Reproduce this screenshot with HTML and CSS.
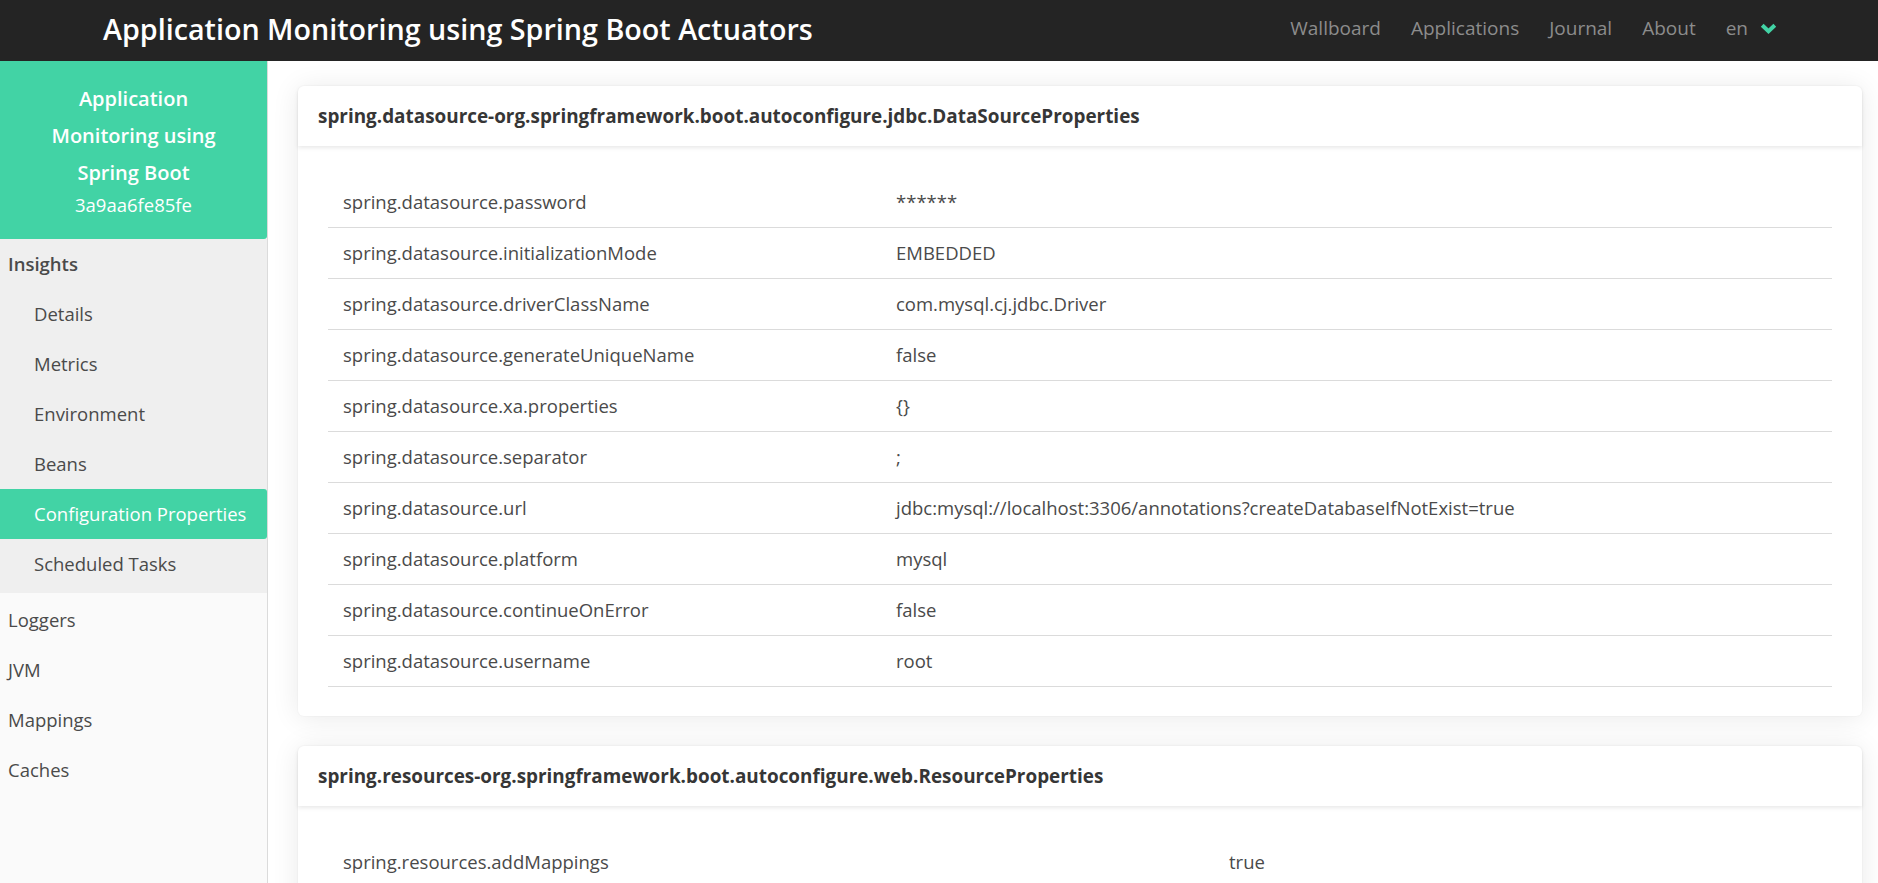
FILE: index.html
```html
<!DOCTYPE html>
<html lang="en">
<head>
<meta charset="utf-8">
<title>Application Monitoring using Spring Boot Actuators</title>
<link rel="stylesheet" href="styles.css">
</head>
<body>
<header class="navbar">
  <div class="brand">Application Monitoring using Spring Boot Actuators</div>
  <nav class="nav-menu">
    <a class="nav-item">Wallboard</a>
    <a class="nav-item">Applications</a>
    <a class="nav-item">Journal</a>
    <a class="nav-item">About</a>
    <a class="nav-item nav-lang">en
      <svg class="chevron" width="17" height="11" viewBox="0 0 17 11" aria-hidden="true">
        <polyline points="2.2,2.2 8.5,8.2 14.8,2.2" fill="none" stroke="#42d3a5" stroke-width="4" stroke-linejoin="miter"/>
      </svg>
    </a>
  </nav>
</header>
<div class="layout">
  <aside class="sidebar">
    <div class="app-card">
      <div class="app-name">Application Monitoring using Spring Boot</div>
      <div class="app-id">3a9aa6fe85fe</div>
    </div>
    <ul class="menu-group">
      <li class="menu-item menu-head">Insights</li>
      <li class="menu-item menu-sub">Details</li>
      <li class="menu-item menu-sub">Metrics</li>
      <li class="menu-item menu-sub">Environment</li>
      <li class="menu-item menu-sub">Beans</li>
      <li class="menu-item menu-sub is-active">Configuration Properties</li>
      <li class="menu-item menu-sub">Scheduled Tasks</li>
    </ul>
    <ul class="menu-rest">
      <li class="menu-item">Loggers</li>
      <li class="menu-item">JVM</li>
      <li class="menu-item">Mappings</li>
      <li class="menu-item">Caches</li>
    </ul>
  </aside>
  <main class="content">
    <section class="card">
      <header class="card-header">spring.datasource-org.springframework.boot.autoconfigure.jdbc.DataSourceProperties</header>
      <div class="card-content">
        <table class="props props-datasource">
          <tbody>
            <tr><td class="key">spring.datasource.password</td><td>******</td></tr>
            <tr><td class="key">spring.datasource.initializationMode</td><td>EMBEDDED</td></tr>
            <tr><td class="key">spring.datasource.driverClassName</td><td>com.mysql.cj.jdbc.Driver</td></tr>
            <tr><td class="key">spring.datasource.generateUniqueName</td><td>false</td></tr>
            <tr><td class="key">spring.datasource.xa.properties</td><td>{}</td></tr>
            <tr><td class="key">spring.datasource.separator</td><td>;</td></tr>
            <tr><td class="key">spring.datasource.url</td><td>jdbc:mysql://localhost:3306/annotations?createDatabaseIfNotExist=true</td></tr>
            <tr><td class="key">spring.datasource.platform</td><td>mysql</td></tr>
            <tr><td class="key">spring.datasource.continueOnError</td><td>false</td></tr>
            <tr><td class="key">spring.datasource.username</td><td>root</td></tr>
          </tbody>
        </table>
      </div>
    </section>
    <section class="card">
      <header class="card-header">spring.resources-org.springframework.boot.autoconfigure.web.ResourceProperties</header>
      <div class="card-content">
        <table class="props props-resources">
          <tbody>
            <tr><td class="key">spring.resources.addMappings</td><td>true</td></tr>
          </tbody>
        </table>
      </div>
    </section>
  </main>
</div>
</body>
</html>
```

FILE: styles.css
```css
html, body {
  margin: 0;
  padding: 0;
  height: 100%;
  overflow: hidden;
}

body {
  font-family: "Open Sans", "Noto Sans", "DejaVu Sans", sans-serif;
  font-size: 18.5px;
  color: #4a4a4a;
  background: #ffffff;
}

/* ---------- Navbar ---------- */
.navbar {
  height: 61px;
  box-sizing: border-box;
  background: #242424;
  display: flex;
  align-items: center;
  justify-content: space-between;
  padding: 0 101px 5px 103px;
}

.brand {
  color: #ffffff;
  font-weight: 600;
  font-size: 28.7px;
  white-space: nowrap;
}

.nav-menu {
  display: flex;
  align-items: center;
  font-size: 19px;
}

.nav-item {
  color: #8c8c8c;
  padding: 0 15px;
  line-height: 30px;
  display: flex;
  align-items: center;
  text-decoration: none;
}

.nav-lang {
  padding-right: 0;
}

.chevron {
  margin-left: 12px;
  display: block;
}

/* ---------- Layout ---------- */
.layout {
  display: flex;
  height: calc(100vh - 61px);
}

.sidebar {
  width: 267px;
  flex: 0 0 267px;
  background: #fafafa;
  border-right: 1px solid #dbdbdb;
}

.app-card {
  background: #42d3a5;
  color: #ffffff;
  text-align: center;
  padding: 19px 44px 20px;
  height: 178px;
  box-sizing: border-box;
  border-radius: 0 0 3px 0;
}

.app-name {
  font-weight: 600;
  font-size: 20px;
  line-height: 37px;
}

.app-id {
  font-size: 18.5px;
  line-height: 30px;
  margin-top: -1px;
}

.menu-group,
.menu-rest {
  list-style: none;
  margin: 0;
  padding: 0;
}

.menu-group {
  background: #efefef;
  padding-bottom: 4px;
}

.menu-rest {
  padding-top: 2px;
}

.menu-item {
  height: 50px;
  line-height: 50px;
  padding-left: 8px;
  white-space: nowrap;
  color: #4a4a4a;
}

.menu-head {
  font-weight: 600;
}

.menu-sub {
  padding-left: 34px;
}

.menu-sub.is-active {
  background: #42d3a5;
  color: #ffffff;
  border-radius: 0 3px 3px 0;
}

/* ---------- Content ---------- */
.content {
  flex: 1;
  padding: 25px 16px 0 30px;
  min-width: 0;
}

.card {
  background: #ffffff;
  border-radius: 6px;
  box-shadow: 0 2px 28px rgba(10, 10, 10, 0.09), 0 0 0 1px rgba(10, 10, 10, 0.015);
  margin-bottom: 30px;
}

.card-header {
  height: 60px;
  line-height: 61px;
  padding: 0 20px;
  font-weight: 700;
  font-size: 18.9px;
  color: #363636;
  border-radius: 6px 6px 0 0;
  box-shadow: 0 2px 4px rgba(10, 10, 10, 0.09);
  white-space: nowrap;
}

.card-content {
  padding: 31px 30px 29px;
}

.props {
  width: 100%;
  border-collapse: collapse;
  table-layout: fixed;
}

.props td {
  padding: 10px 15px;
  line-height: 30px;
  border-bottom: 1px solid #dbdbdb;
  white-space: nowrap;
  color: #4a4a4a;
}

.props-datasource .key {
  width: 523px;
}

.props-resources .key {
  width: 856px;
}
```
